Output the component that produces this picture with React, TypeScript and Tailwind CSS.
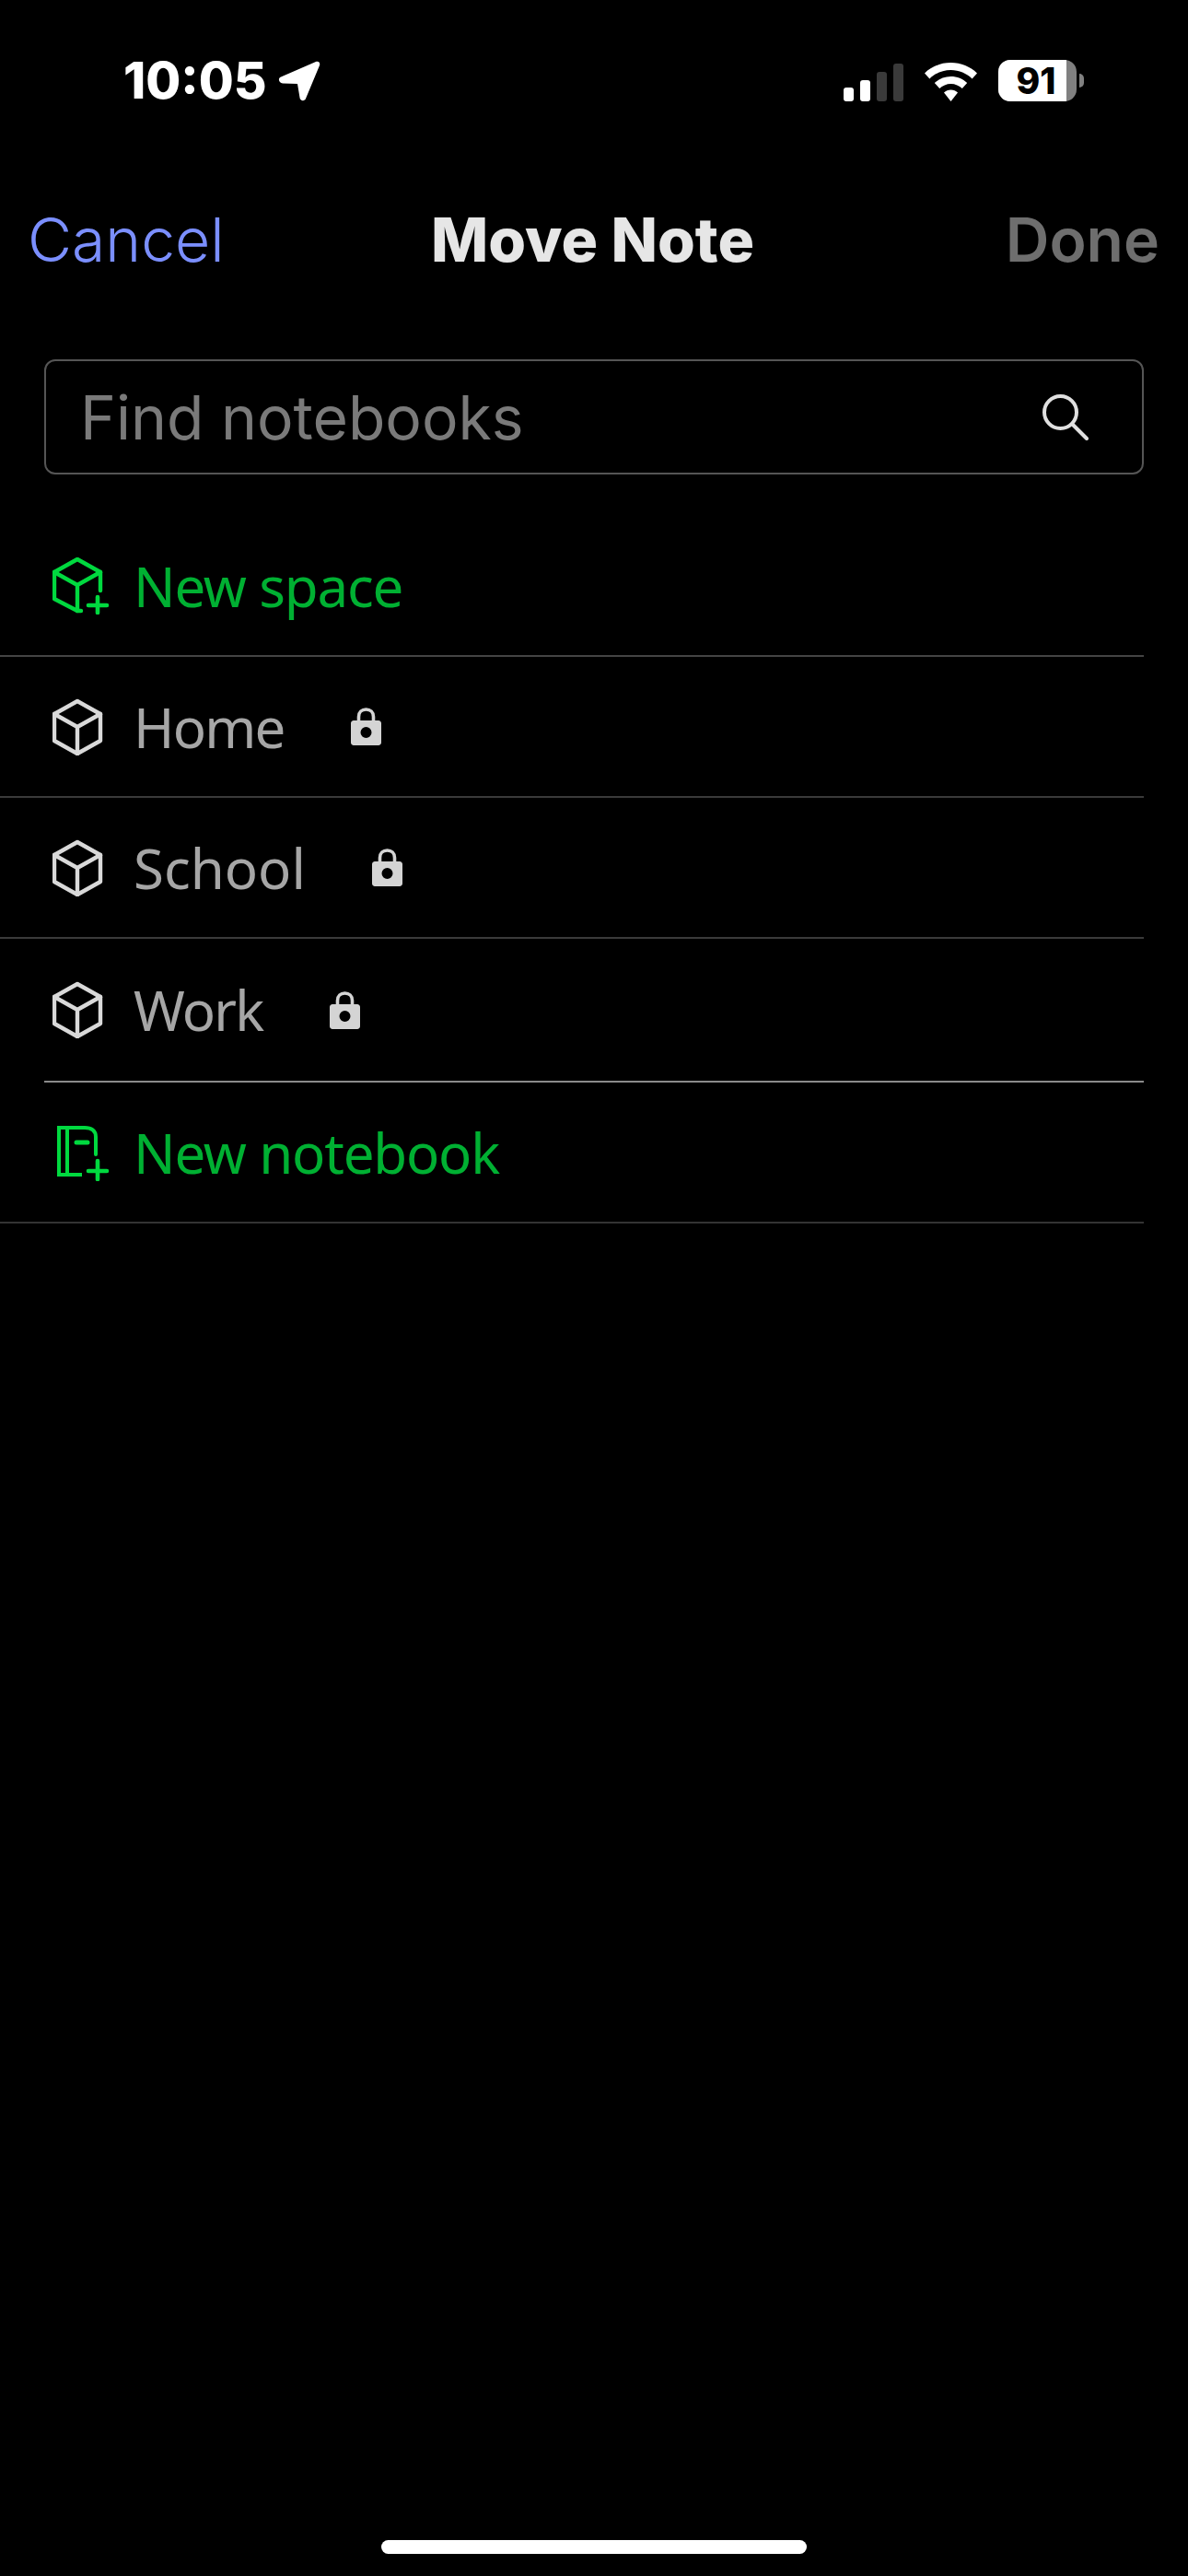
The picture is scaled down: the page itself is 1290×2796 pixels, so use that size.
const spaces = [
  { name: "Home", tracking: "tracking-[-0.03em]" },
  { name: "School", tracking: "tracking-[0em]" },
  { name: "Work", tracking: "tracking-[-0.03em]" },
];

const listFont = "font-['Noto_Sans',sans-serif] text-[60px] leading-none";

function LocationArrow() {
  return (
    <svg width="46" height="44" viewBox="0 0 46 44" className="ml-[12px]">
      <path
        d="M41 1 C44 0 46 2 45 5 L30 41 C29 44 24 44 23.5 40 L21 25 L5 24.5 C0.5 24 -0.5 19 3 17.5 Z"
        fill="#fff"
      />
    </svg>
  );
}

function Signal() {
  return (
    <div className="flex items-end gap-[7px] h-[41px]">
      <div className="w-[11px] h-[15px] rounded-[3px] bg-white" />
      <div className="w-[11px] h-[23px] rounded-[3px] bg-white" />
      <div className="w-[11px] h-[32px] rounded-[3px] bg-[#3a3a3a]" />
      <div className="w-[11px] h-[41px] rounded-[3px] bg-[#3a3a3a]" />
    </div>
  );
}

function Wifi() {
  return (
    <svg width="57" height="42" viewBox="0 0 57 42" fill="#fff">
      <path d="M28.5 0 C39.5 0 49.5 4.2 57 11.4 L51.6 17.4 C45.6 11.6 37.4 8 28.5 8 C19.6 8 11.4 11.6 5.4 17.4 L0 11.4 C7.5 4.2 17.5 0 28.5 0 Z" />
      <path d="M28.5 15 C35.3 15 41.5 17.6 46.2 22 L40.8 28 C37.6 25 33.2 23 28.5 23 C23.8 23 19.4 25 16.2 28 L10.8 22 C15.5 17.6 21.7 15 28.5 15 Z" />
      <path d="M28.5 29.6 C31.4 29.6 34 30.7 36 32.6 L28.5 42 L21 32.6 C23 30.7 25.6 29.6 28.5 29.6 Z" />
    </svg>
  );
}

function Battery() {
  return (
    <div className="flex items-center gap-[3px]">
      <div className="w-[85px] h-[45px] rounded-[13px] overflow-hidden flex bg-[#808080]">
        <div className="w-[74px] h-full bg-white flex items-center justify-center pl-[8px]">
          <span className="font-['Inter',sans-serif] text-[39px] leading-none font-extrabold text-black">91</span>
        </div>
      </div>
      <div className="w-[5px] h-[15px] rounded-r-full bg-[#808080]" />
    </div>
  );
}

function SearchIcon() {
  return (
    <svg width="50" height="50" viewBox="0 0 50 50" fill="none" stroke="#e0e0e0" strokeWidth="4" strokeLinecap="round">
      <circle cx="19.5" cy="19.5" r="17.5" />
      <path d="M33 33 L48 48" />
    </svg>
  );
}

function CubeIcon() {
  return (
    <svg width="62" height="62" viewBox="0 0 62 62" fill="none" stroke="#d9d9d9" strokeWidth="4.4" strokeLinejoin="round" strokeLinecap="round">
      <path d="M27 3 L52 17 V46 L27 60 L2 46 V17 Z" />
      <path d="M2 17 L27 31 L52 17 M27 31 V60" />
    </svg>
  );
}

function NewSpaceIcon() {
  return (
    <svg width="62" height="62" viewBox="0 0 62 62" fill="none" stroke="#00d93f" strokeWidth="4.4" strokeLinejoin="round" strokeLinecap="round">
      <path d="M52 36 V16 L27 2 L2 16 V45 L27 58 H31" />
      <path d="M2 16 L27 30 L52 16 M27 30 V58" />
      <path d="M49 43 V60 M39 52 H59" strokeWidth="4.6" />
    </svg>
  );
}

function NotebookIcon() {
  return (
    <svg width="62" height="62" viewBox="0 0 62 62" fill="none" stroke="#00d93f" strokeWidth="4" strokeLinecap="round">
      <path d="M35 4 H7 V55 H32" strokeLinecap="butt" />
      <path d="M16 4 V55" strokeLinecap="butt" />
      <path d="M35 4 C42 4 47 7 47 14 V33" />
      <path d="M26 20 H38" strokeWidth="5" />
      <path d="M49 40 V60 M39 51 H59" strokeWidth="4.6" />
    </svg>
  );
}

function LockIcon() {
  return (
    <svg width="33" height="41" viewBox="0 0 33 41">
      <path d="M8.5 16 V10 C8.5 5 12 2 16.5 2 C21 2 24.5 5 24.5 10 V16" fill="none" stroke="#d4d4d4" strokeWidth="3.6" />
      <path fillRule="evenodd" d="M3 14 H30 C31.6 14 33 15.4 33 17 V38 C33 39.6 31.6 41 30 41 H3 C1.4 41 0 39.6 0 38 V17 C0 15.4 1.4 14 3 14 Z M16.5 21 A6 6 0 1 0 16.5 33 A6 6 0 1 0 16.5 21 Z" fill="#d4d4d4" />
    </svg>
  );
}

export default function App() {
  return (
    <div className="w-[1290px] h-[2796px] bg-black flex flex-col overflow-hidden font-['Inter',sans-serif]">
      {/* status bar */}
      <div className="h-[110px] pt-[65px] pl-[134px] pr-[113px] flex items-start justify-between">
        <div className="flex items-center h-[45px]">
          <span className="text-[55px] leading-none font-extrabold text-white">10:05</span>
          <LocationArrow />
        </div>
        <div className="flex items-end gap-[23px] h-[45px]">
          <Signal />
          <Wifi />
          <Battery />
        </div>
      </div>

      {/* nav bar */}
      <div className="h-[280px] pt-[110px] pl-[30px] pr-[31px] flex items-start justify-between text-[66px] leading-[80px]">
        <span className="w-[300px] font-light text-[#7b8fff]">Cancel</span>
        <span className="font-extrabold text-[#e6e6e6] -ml-[2px]">Move Note</span>
        <span className="w-[300px] text-right font-semibold text-[#6e6e6e]">Done</span>
      </div>

      {/* search */}
      <div className="ml-[48px] w-[1194px] h-[125px] rounded-[12px] border-2 border-[#555555] pl-[37px] pr-[58px] flex items-center justify-between">
        <span className="text-[66px] leading-none font-normal text-[#7a7a7a]">Find notebooks</span>
        <SearchIcon />
      </div>

      {/* list */}
      <div className="w-[1242px] mt-[59px]">
        <div className="h-[139px] pb-[14px] pl-[57px] flex items-center gap-[26px] border-b-2 border-[#444444]">
          <NewSpaceIcon />
          <span className={`${listFont} tracking-[-0.02em] text-[#00b032]`}>New space</span>
        </div>
        {spaces.map((space, i) => {
          const last = i === spaces.length - 1;
          return (
            <div
              key={space.name}
              className={`flex items-center gap-[26px] border-b-2 ${
                last ? "h-[156px] ml-[48px] pl-[9px] border-[#8a8a8a]" : "h-[153px] pl-[57px] border-[#3a3a3a]"
              }`}
            >
              <CubeIcon />
              <span className={`${listFont} ${space.tracking} text-[#a6a6a6] mr-[46px]`}>{space.name}</span>
              <LockIcon />
            </div>
          );
        })}
        <div className="h-[153px] pl-[57px] flex items-center gap-[26px] border-b-2 border-[#333333]">
          <NotebookIcon />
          <span className={`${listFont} tracking-[-0.02em] text-[#00b032]`}>New notebook</span>
        </div>
      </div>

      {/* home indicator */}
      <div className="mt-auto mb-[24px] mx-auto w-[462px] h-[15px] rounded-full bg-white" />
    </div>
  );
}
